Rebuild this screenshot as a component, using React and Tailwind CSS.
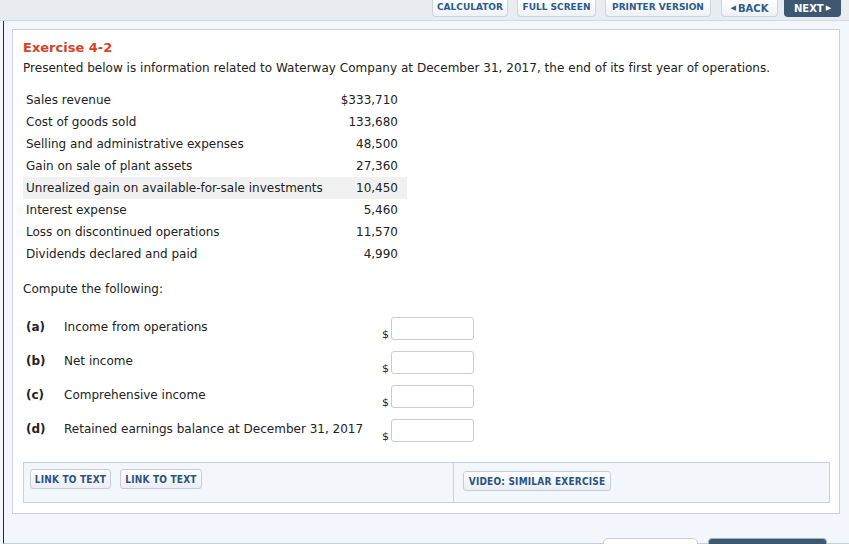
import React from 'react';

const rows = [
  ['Sales revenue', '$333,710'],
  ['Cost of goods sold', '133,680'],
  ['Selling and administrative expenses', '48,500'],
  ['Gain on sale of plant assets', '27,360'],
  ['Unrealized gain on available-for-sale investments', '10,450', true],
  ['Interest expense', '5,460'],
  ['Loss on discontinued operations', '11,570'],
  ['Dividends declared and paid', '4,990'],
];

const questions = [
  ['(a)', 'Income from operations'],
  ['(b)', 'Net income'],
  ['(c)', 'Comprehensive income'],
  ['(d)', 'Retained earnings balance at December 31, 2017'],
];

function TopButton({ children, className = '' }) {
  return (
    <div
      className={`h-[17px] flex items-center justify-center rounded-b-[4px] border border-t-0 border-[#cdd4dd] bg-gradient-to-b from-[#ffffff] to-[#eef1f5] text-[9px] font-bold text-[#2c5a8d] ${className}`}
    >
      {children}
    </div>
  );
}

function LinkButton({ children, className = '' }) {
  return (
    <div
      className={`h-[20px] flex items-center justify-center whitespace-nowrap rounded-[3px] border border-[#c6cdd7] bg-gradient-to-b from-[#ffffff] to-[#eaeef3] text-[10px] font-bold text-[#2b5283] tracking-[0.2px] ${className}`}
      style={{ fontFamily: '"DejaVu Sans Condensed", "Liberation Sans Narrow", "Liberation Sans", sans-serif' }}
    >
      {children}
    </div>
  );
}

export default function App() {
  return (
    <div
      className="w-[849px] h-[544px] overflow-hidden bg-[#f3f6fa] text-[#222]"
      style={{ fontFamily: '"DejaVu Sans", Verdana, sans-serif' }}
    >
      {/* toolbar */}
      <div className="h-[21px] bg-[#e9edf1] border-b border-[#d3d9e0] flex items-start justify-end pr-[8px]">
        <TopButton className="w-[76px] h-[16px]">CALCULATOR</TopButton>
        <TopButton className="w-[79px] h-[16px] ml-[9px]">FULL SCREEN</TopButton>
        <TopButton className="w-[106px] h-[16px] ml-[9px]">PRINTER VERSION</TopButton>
        <TopButton className="w-[57px] ml-[10px] text-[10px]">
          <span className="text-[7px] mr-[2px]">◀</span>BACK
        </TopButton>
        <div className="w-[57px] h-[17px] ml-[6px] flex items-center justify-center rounded-b-[4px] bg-[#3d5870] text-[10px] font-bold text-white">
          NEXT<span className="text-[7px] ml-[2px]">▶</span>
        </div>
      </div>

      <div className="ml-[3px] h-[523px] border-l border-[#2b2b2b] border-b border-b-[#c8ced6] pl-[8px] pt-[8px] box-border">
        {/* main panel */}
        <div className="w-[828px] h-[485px] bg-white border border-[#c9d1dc] box-border px-[10px] pt-[10px]">
          <div className="text-[13px] leading-[16px] font-bold text-[#d5421f]">Exercise 4-2</div>
          <div className="mt-[5px] text-[12px] leading-[15px] tracking-[0.03px]">
            Presented below is information related to Waterway Company at December 31, 2017, the end of its first year of operations.
          </div>

          <div className="mt-[13px] w-[384px] text-[12px]">
            {rows.map(([label, value, hl]) => (
              <div
                key={label}
                className={`h-[22px] flex items-center justify-between pl-[3px] pr-[9px] ${hl ? 'bg-[#f1f1f1]' : ''}`}
              >
                <span>{label}</span>
                <span>{value}</span>
              </div>
            ))}
          </div>

          <div className="mt-[17px] text-[12px] leading-[15px]">Compute the following:</div>

          <div className="mt-[19px] text-[12px]">
            {questions.map(([tag, label]) => (
              <div key={tag} className="h-[34px] flex items-start">
                <span className="w-[41px] pl-[3px] pt-[4px] leading-[15px] font-bold">{tag}</span>
                <span className="w-[318px] pt-[4px] leading-[15px]">{label}</span>
                <span className="w-[9px] pt-[11px] leading-[15px] text-[11px]">$</span>
                <div className="w-[83px] h-[23px] mt-[1px] rounded-[3px] border border-[#cbcbcb] bg-white" />
              </div>
            ))}
          </div>

          <div className="mt-[10px] h-[41px] w-[807px] flex border border-[#c9d1dc] bg-[#f3f6fa]">
            <div className="w-[430px] border-r border-[#c9d1dc] flex items-start gap-[9px] pl-[6px] pt-[6px]">
              <LinkButton className="w-[81px]">LINK TO TEXT</LinkButton>
              <LinkButton className="w-[82px]">LINK TO TEXT</LinkButton>
            </div>
            <div className="flex-1 pl-[9px] pt-[8px]">
              <LinkButton className="w-[148px]">VIDEO: SIMILAR EXERCISE</LinkButton>
            </div>
          </div>
        </div>

        {/* bottom nav peeking */}
        <div className="mt-[24px] flex justify-end pr-[22px] gap-[10px]">
          <div className="w-[95px] h-[20px] rounded-t-[5px] border border-[#c8ced6] bg-white" />
          <div className="w-[119px] h-[20px] rounded-t-[4px] border border-[#9fb0c0] bg-[#3d5870]" />
        </div>
      </div>
    </div>
  );
}
